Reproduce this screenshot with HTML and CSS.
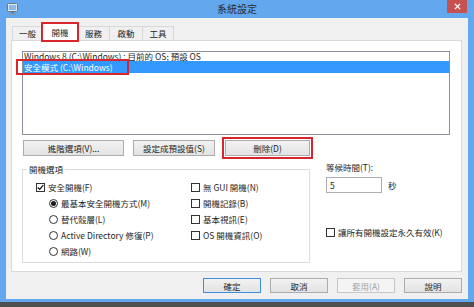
FILE: index.html
```html
<!DOCTYPE html>
<html lang="zh-Hant">
<head>
<meta charset="utf-8">
<link rel="stylesheet" href="styles.css">
</head>
<body>
<div class="window">
  <div class="titlebar">
    <svg class="appicon" viewBox="0 0 11 12" width="11" height="12">
      <rect x="0.5" y="0.5" width="10" height="8" rx="1" fill="#dfe6ee" stroke="#6b7686"/>
      <rect x="2" y="2" width="7" height="5" fill="#8fb8e6"/>
      <rect x="4" y="9" width="3" height="1.5" fill="#6b7686"/>
      <rect x="2" y="10.5" width="7" height="1.5" fill="#8a93a0"/>
    </svg>
    <div class="title">系統設定</div>
    <div class="close">
      <svg viewBox="0 0 8 8" width="7" height="7"><path d="M1 1L7 7M7 1L1 7" stroke="#fff" stroke-width="1.6"/></svg>
    </div>
  </div>
  <div class="client">
    <div class="tabs">
      <div class="tab t1">一般</div>
      <div class="tab t2 active">開機</div>
      <div class="tab t3">服務</div>
      <div class="tab t4">啟動</div>
      <div class="tab t5">工具</div>
    </div>
    <div class="page">
      <div class="listbox">
        <div class="item first">Windows 8 (C:\Windows) : 目前的 OS; 預設 OS</div>
        <div class="item sel">安全模式 (C:\Windows)</div>
        <div class="mark"></div>
      </div>
      <div class="btnrow">
        <div class="btn b-adv">進階選項(V)...</div>
        <div class="btn b-def">設定成預設值(S)</div>
        <div class="btn b-del">刪除(D)</div>
      </div>
      <div class="lower">
        <div class="group">
          <div class="legend">開機選項</div>
          <div class="cols">
            <div class="col left">
              <div class="row"><span class="cb checked"><svg viewBox="0 0 9 9" width="7" height="7"><path d="M1 4.5L3.5 7L8 1.5" fill="none" stroke="#111" stroke-width="1.6"/></svg></span>安全開機(F)</div>
              <div class="row ind"><span class="rb on"></span>最基本安全開機方式(M)</div>
              <div class="row ind"><span class="rb"></span>替代殼層(L)</div>
              <div class="row ind"><span class="rb"></span>Active Directory 修復(P)</div>
              <div class="row ind"><span class="rb"></span>網路(W)</div>
            </div>
            <div class="col right">
              <div class="row"><span class="cb"></span>無 GUI 開機(N)</div>
              <div class="row"><span class="cb"></span>開機記錄(B)</div>
              <div class="row"><span class="cb"></span>基本視訊(E)</div>
              <div class="row"><span class="cb"></span>OS 開機資訊(O)</div>
            </div>
          </div>
        </div>
        <div class="side">
          <div class="lbl">等候時間(T):</div>
          <div class="timeout"><div class="input">5</div><span class="sec">秒</span></div>
          <div class="row perm"><span class="cb"></span>讓所有開機設定永久有效(K)</div>
        </div>
      </div>
    </div>
    <div class="footer">
      <div class="btn fb focus">確定</div>
      <div class="btn fb">取消</div>
      <div class="btn fb disabled">套用(A)</div>
      <div class="btn fb">說明</div>
    </div>
  </div>
</div>
</body>
</html>
```

FILE: styles.css
```css
* { box-sizing: border-box; }
html, body { margin: 0; }
body {
  width: 474px;
  height: 307px;
  overflow: hidden;
  background: #4e4e4e;
  font-family: "Noto Sans CJK TC", "Noto Sans", sans-serif;
  font-size: 8.5px;
  color: #1e1e1e;
}
.window {
  height: 302px;
  background: #63a8ee;
  display: flex;
  flex-direction: column;
}
.titlebar {
  height: 18px;
  display: grid;
  grid-template-columns: 1fr auto 1fr;
  align-items: start;
}
.appicon { margin: 3px 0 0 7px; }
.title {
  font-size: 10px;
  line-height: 18px;
  color: #2a2a2a;
}
.close {
  justify-self: end;
  width: 20px;
  height: 13px;
  margin-right: 7px;
  background: #c75050;
  display: flex;
  align-items: center;
  justify-content: center;
}
.client {
  margin: 0 6px;
  height: 281px;
  background: #f0f0f0;
  padding: 5px 6px 0 5px;
  display: flex;
  flex-direction: column;
}
.tabs {
  display: flex;
  align-items: flex-end;
  height: 17px;
  padding-left: 1px;
  position: relative;
  z-index: 1;
}
.tab {
  height: 14px;
  border: 1px solid #d9d9d9;
  border-bottom: none;
  background: #f0f0f0;
  text-align: center;
  line-height: 13px;
  margin-right: -1px;
}
.t1 { width: 31px; }
.t2 { width: 36px; }
.t3 { width: 33px; }
.t4 { width: 34px; }
.t5 { width: 32px; }
.tab.active {
  height: 18px;
  margin-bottom: -1px;
  background: #fff;
  line-height: 16px;
  position: relative;
  outline: 2px solid #d9252d;
  outline-offset: -1px;
  z-index: 2;
}
.page {
  height: 232px;
  border: 1px solid #d9d9d9;
  background: #fff;
  padding: 10px 10px 0 10px;
  width: 451px;
}
.listbox {
  position: relative;
  width: 428px;
  height: 84px;
  border: 1px solid #8c9099;
  background: #fff;
}
.item {
  height: 12px;
  line-height: 12px;
  padding-left: 1px;
  white-space: nowrap;
}
.item.first { height: 9px; line-height: 9px; }
.item.sel {
  background: #3399ff;
  color: #fff;
}
.mark {
  position: absolute;
  left: -7px;
  top: 7px;
  width: 113px;
  height: 16px;
  border: 2px solid #d9252d;
}
.btnrow {
  display: flex;
  margin-top: 5px;
  padding-left: 1px;
}
.btn {
  height: 16px;
  border: 1px solid #acacac;
  background: linear-gradient(#f2f2f2, #e3e3e3);
  display: flex;
  align-items: center;
  justify-content: center;
  color: #1e1e1e;
}
.b-adv { width: 101px; }
.b-def { width: 82px; margin-left: 9px; }
.b-del {
  width: 85px;
  margin-left: 10px;
  outline: 2px solid #d9252d;
  outline-offset: 1px;
}
.lower { display: flex; }
.group {
  margin-top: 13px;
  width: 288px;
  height: 94px;
  border: 1px solid #dcdcdc;
  background: #fff;
}
.legend {
  margin: -6px 0 0 4px;
  height: 11px;
  line-height: 11px;
  padding: 0 2px;
  background: #fff;
  width: fit-content;
}
.cols {
  display: flex;
  margin-top: 4px;
  padding-left: 13px;
}
.col.left { width: 155px; }
.row {
  height: 16px;
  display: flex;
  align-items: center;
  white-space: nowrap;
}
.row.ind { padding-left: 13px; }
.cb {
  width: 9px;
  height: 9px;
  border: 1px solid #333;
  background: #fff;
  margin-right: 3px;
  display: flex;
  align-items: center;
  justify-content: center;
  flex: none;
}
.rb {
  width: 9px;
  height: 9px;
  border: 1px solid #333;
  border-radius: 50%;
  background: #fff;
  margin-right: 3px;
  display: flex;
  align-items: center;
  justify-content: center;
  flex: none;
}
.rb.on::after {
  content: "";
  width: 5px;
  height: 5px;
  border-radius: 50%;
  background: #1a1a1a;
}
.side {
  margin-left: 16px;
  padding-top: 6px;
}
.lbl { height: 11px; line-height: 11px; }
.timeout {
  display: flex;
  align-items: center;
  margin-top: 4px;
}
.input {
  width: 56px;
  height: 16px;
  border: 1px solid #abadb3;
  background: #fff;
  line-height: 14px;
  padding-left: 3px;
}
.sec { margin-left: 6px; }
.perm { margin-top: 31px; }
.footer {
  display: flex;
  justify-content: flex-end;
  gap: 9px;
  margin-top: 6px;
}
.fb { width: 58px; height: 15px; }
.fb.focus { border-color: #3c8fe0; }
.fb.disabled {
  color: #a2a2a2;
  background: #f4f4f4;
  border-color: #c8c8c8;
}
```
